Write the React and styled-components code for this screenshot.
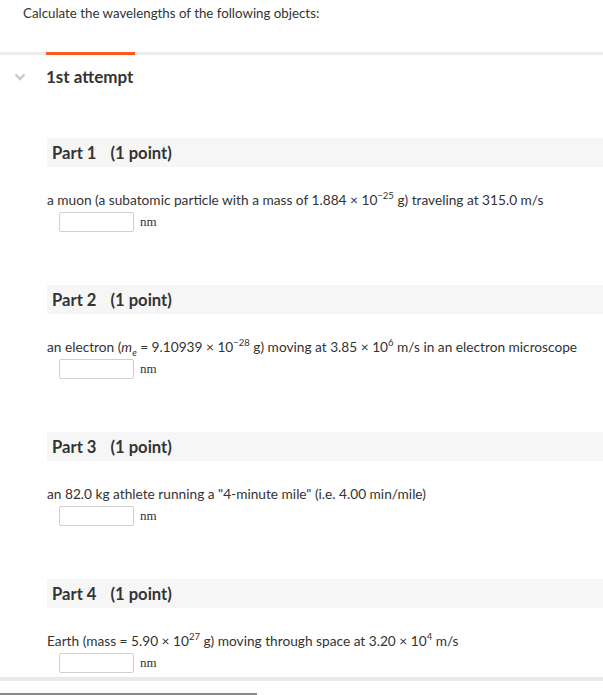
import styled, { createGlobalStyle } from "styled-components";

const Global = createGlobalStyle`
  body {
    margin: 0;
    background: #fff;
  }
`;

const Page = styled.div`
  width: 603px;
  height: 695px;
  overflow: hidden;
  position: relative;
  background: #fff;
  font-family: Lato, "Open Sans", sans-serif;
  color: #333;
`;

const Title = styled.p`
  margin: 0;
  padding: 5px 0 0 23px;
  font-size: 13.3px;
  line-height: 16px;
`;

const TabLine = styled.div`
  margin-top: 31px;
  height: 3px;
  background: #ebebeb;
  display: flex;
`;

const ActiveTab = styled.div`
  margin-left: 46px;
  width: 89px;
  height: 3px;
  background: #fa5a1e;
`;

const AttemptRow = styled.div`
  margin-top: 12px;
  height: 20px;
  display: flex;
  align-items: center;
`;

const Chevron = styled.span`
  width: 32px;
  padding-left: 14px;
  display: flex;
  align-items: center;
`;

const AttemptTitle = styled.h2`
  margin: 0;
  font-size: 17px;
  line-height: 20px;
  font-weight: 700;
`;

const Parts = styled.div`
  margin-top: 51px;
  margin-left: 47px;
  display: flex;
  flex-direction: column;
  gap: 53px;
`;

const PartBlock = styled.div`
  display: flex;
  flex-direction: column;
`;

const PartHeader = styled.div`
  height: 29px;
  background: #f6f6f6;
  padding-left: 5px;
  display: flex;
  align-items: center;
  gap: 14px;
  font-size: 16.6px;
  font-weight: 700;
`;

const Question = styled.p`
  margin: 25px 0 0;
  font-size: 13.7px;
  line-height: 16px;
  white-space: nowrap;

  sup,
  sub {
    font-size: 9.5px;
    line-height: 0;
  }
`;

const AnswerRow = styled.div`
  margin-top: 4px;
  margin-left: 12px;
  display: flex;
  align-items: center;
  gap: 6px;
`;

const AnswerInput = styled.input`
  box-sizing: border-box;
  width: 75px;
  height: 20px;
  border: 1px solid #cfcfcf;
  border-radius: 2px;
  margin: 0;
  padding: 0 4px;
`;

const Unit = styled.span`
  font-family: "Liberation Serif", "Times New Roman", serif;
  font-size: 13px;
`;

const BottomRule = styled.div`
  margin-top: 4px;
  height: 4px;
  background: #e9e9e9;
`;

const ScrollThumb = styled.div`
  margin-top: 12px;
  width: 257px;
  height: 2px;
  background: #8a8a8a;
`;

const parts = [
  {
    n: 1,
    text: (
      <>
        a muon (a subatomic particle with a mass of 1.884 × 10<sup>−25</sup> g) traveling at 315.0 m/s
      </>
    ),
  },
  {
    n: 2,
    text: (
      <>
        an electron (<i>m</i><sub><i>e</i></sub> = 9.10939 × 10<sup>−28</sup> g) moving at 3.85 × 10<sup>6</sup> m/s in an electron microscope
      </>
    ),
  },
  {
    n: 3,
    text: <>an 82.0 kg athlete running a "4-minute mile" (i.e. 4.00 min/mile)</>,
  },
  {
    n: 4,
    text: (
      <>
        Earth (mass = 5.90 × 10<sup>27</sup> g) moving through space at 3.20 × 10<sup>4</sup> m/s
      </>
    ),
  },
];

const App = () => {
  return (
    <Page>
      <Global />
      <Title>Calculate the wavelengths of the following objects:</Title>
      <TabLine>
        <ActiveTab />
      </TabLine>
      <AttemptRow>
        <Chevron>
          <svg width="12" height="8" viewBox="0 0 12 8">
            <path d="M1.5 1.5 L6 6 L10.5 1.5" fill="none" stroke="#c8c8c8" strokeWidth="2.4" />
          </svg>
        </Chevron>
        <AttemptTitle>1st attempt</AttemptTitle>
      </AttemptRow>
      <Parts>
        {parts.map((p) => (
          <PartBlock key={p.n}>
            <PartHeader>
              <span>Part {p.n}</span>
              <span>(1 point)</span>
            </PartHeader>
            <Question>{p.text}</Question>
            <AnswerRow>
              <AnswerInput type="text" />
              <Unit>nm</Unit>
            </AnswerRow>
          </PartBlock>
        ))}
      </Parts>
      <BottomRule />
      <ScrollThumb />
    </Page>
  );
};

export default App;
